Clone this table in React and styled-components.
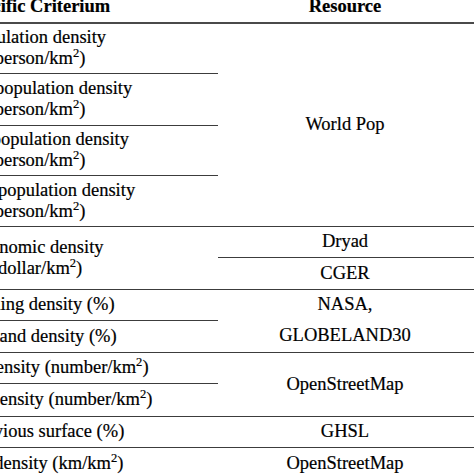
import React from 'react'
import styled, { createGlobalStyle } from 'styled-components'

const GlobalStyle = createGlobalStyle`
  html, body {
    margin: 0;
    padding: 0;
    background: #fff;
    overflow: hidden;
  }
  body {
    width: 474px;
    height: 474px;
  }
`

const Page = styled.div`
  width: 474px;
  height: 474px;
  overflow: hidden;
  font-family: "Liberation Serif", "Times New Roman", serif;
  font-size: 18.5px;
  color: #000;
  -webkit-text-stroke: 0.2px #000;
`

const Table = styled.table`
  border-collapse: collapse;
  table-layout: fixed;
  width: 616px;
  margin-left: -144px;
  margin-top: -9px;
`

const HeadCell = styled.th`
  width: ${props => props.$width}px;
  height: 31px;
  padding: 0 ${props => props.$padRight || 0}px 0 0;
  font-weight: bold;
  text-align: center;
  white-space: nowrap;
  border-bottom: 2px solid #4a4a4a;
`

const Row = styled.tr`
  height: ${props => props.$height}px;
`

const Cell = styled.td`
  padding: 0 ${props => props.$padRight || 0}px 0 0;
  text-align: center;
  vertical-align: middle;
  white-space: nowrap;
  line-height: 21px;
  border-bottom: ${props => (props.$open ? 'none' : '1px solid #3c3c3c')};
`

const Line = styled.span`
  display: block;
`

const Sup = styled.sup`
  font-size: 0.68em;
  line-height: 0;
  vertical-align: 0.55em;
`

const PerKm = ({ unit }) => (
  <>({unit}/km<Sup>2</Sup>)</>
)

const RIGHT_PAD = 34

export default function App() {
  return (
    <Page>
      <GlobalStyle />
      <Table>
        <thead>
          <tr>
            <HeadCell $width={362}>Specific Criterium</HeadCell>
            <HeadCell $width={254} $padRight={RIGHT_PAD}>Resource</HeadCell>
          </tr>
        </thead>
        <tbody>
          <Row $height={50}>
            <Cell>
              <Line>Population density</Line>
              <Line><PerKm unit="person" /></Line>
            </Cell>
            <Cell rowSpan={4} $padRight={RIGHT_PAD}>World Pop</Cell>
          </Row>
          <Row $height={52}>
            <Cell>
              <Line>Young population density</Line>
              <Line><PerKm unit="person" /></Line>
            </Cell>
          </Row>
          <Row $height={50}>
            <Cell>
              <Line>Adult population density</Line>
              <Line><PerKm unit="person" /></Line>
            </Cell>
          </Row>
          <Row $height={51}>
            <Cell>
              <Line>Elderly population density</Line>
              <Line><PerKm unit="person" /></Line>
            </Cell>
          </Row>

          <Row $height={31}>
            <Cell rowSpan={2}>
              <Line>Economic density</Line>
              <Line><PerKm unit="dollar" /></Line>
            </Cell>
            <Cell $padRight={RIGHT_PAD}>Dryad</Cell>
          </Row>
          <Row $height={32}>
            <Cell $padRight={RIGHT_PAD}>CGER</Cell>
          </Row>

          <Row $height={31}>
            <Cell>Building density (%)</Cell>
            <Cell $open $padRight={RIGHT_PAD}>NASA,</Cell>
          </Row>
          <Row $height={32}>
            <Cell>Cropland density (%)</Cell>
            <Cell $padRight={RIGHT_PAD}>GLOBELAND30</Cell>
          </Row>

          <Row $height={31}>
            <Cell>Facility density <PerKm unit="number" /></Cell>
            <Cell rowSpan={2} $padRight={RIGHT_PAD}>OpenStreetMap</Cell>
          </Row>
          <Row $height={33}>
            <Cell>Bus stop density <PerKm unit="number" /></Cell>
          </Row>

          <Row $height={31}>
            <Cell>Impervious surface (%)</Cell>
            <Cell $padRight={RIGHT_PAD}>GHSL</Cell>
          </Row>
          <Row $height={32}>
            <Cell>Road density <PerKm unit="km" /></Cell>
            <Cell $padRight={RIGHT_PAD}>OpenStreetMap</Cell>
          </Row>
        </tbody>
      </Table>
    </Page>
  )
}
